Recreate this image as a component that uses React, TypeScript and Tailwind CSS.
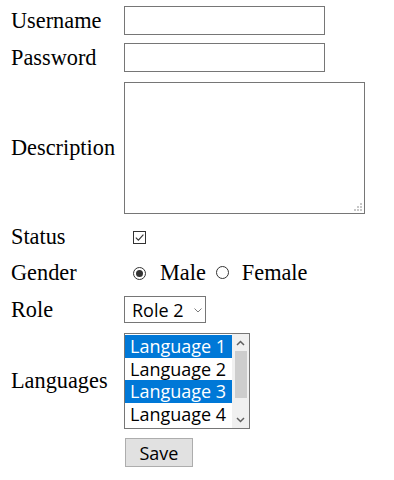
import React from "react";

const serif = { fontFamily: '"Liberation Serif", "Times New Roman", serif' };

function Row({ label, h, children }: { label: string; h: string; children: React.ReactNode }) {
  return (
    <div className={`flex items-center ${h}`}>
      <div className="w-[113px] shrink-0 text-[22.3px] leading-normal text-black">{label}</div>
      <div className="flex items-center">{children}</div>
    </div>
  );
}

function Option({ text, selected }: { text: string; selected?: boolean }) {
  return (
    <div
      className={`h-[22.5px] shrink-0 pl-[5px] flex items-center text-[18px] leading-none whitespace-nowrap ${
        selected ? "bg-[#0078d7] text-white" : "text-black"
      }`}
    >
      {text}
    </div>
  );
}

export default function App() {
  const sans = { fontFamily: '"Open Sans", "Noto Sans", sans-serif' };
  return (
    <div className="w-[394px] h-[480px] bg-white pt-[2px] pl-[11px]" style={serif}>
      <Row label="Username" h="h-[37px]">
        <div className="w-[201px] h-[29px] border border-[#767676] bg-white" />
      </Row>
      <Row label="Password" h="h-[37px]">
        <div className="w-[201px] h-[29px] border border-[#767676] bg-white" />
      </Row>
      <Row label="Description" h="h-[144px]">
        <div className="relative w-[241px] h-[132px] border border-[#767676] bg-white">
          <svg className="absolute right-[2px] bottom-[2px]" width="9" height="9" viewBox="0 0 9 9">
            <rect x="7" y="1" width="2" height="2" fill="#c8c8c8" />
            <rect x="4" y="4" width="2" height="2" fill="#c8c8c8" />
            <rect x="7" y="4" width="2" height="2" fill="#c8c8c8" />
            <rect x="1" y="7" width="2" height="2" fill="#c8c8c8" />
            <rect x="4" y="7" width="2" height="2" fill="#c8c8c8" />
            <rect x="7" y="7" width="2" height="2" fill="#c8c8c8" />
          </svg>
        </div>
      </Row>
      <Row label="Status" h="h-[34px]">
        <div className="ml-[9px] w-[13px] h-[13px] border border-[#333333] bg-white flex items-center justify-center">
          <svg width="11" height="11" viewBox="0 0 11 11">
            <path d="M1.8 5.6 L4.4 8.2 L9.4 2.6" fill="none" stroke="#333333" strokeWidth="1.1" />
          </svg>
        </div>
      </Row>
      <Row label="Gender" h="h-[38px]">
        <div className="flex items-center text-[22.3px] leading-normal text-black">
          <div className="ml-[9px] w-[13px] h-[13px] rounded-full border border-[#333333] flex items-center justify-center">
            <div className="w-[7px] h-[7px] rounded-full bg-[#333333]" />
          </div>
          <span className="ml-[14px]">Male</span>
          <div className="ml-[10px] w-[13px] h-[13px] rounded-full border border-[#333333] -mt-[2px]" />
          <span className="ml-[13px]">Female</span>
        </div>
      </Row>
      <Row label="Role" h="h-[35px]">
        <div
          className="w-[82px] h-[27px] border border-[#767676] bg-white flex items-center pl-[7px] text-[18px] text-black leading-none"
          style={sans}
        >
          <span>Role 2</span>
          <svg className="ml-[10px] mt-[2px]" width="8" height="5" viewBox="0 0 8 5">
            <path d="M0.5 0.5 L4 4 L7.5 0.5" fill="none" stroke="#6d6d6d" strokeWidth="0.9" />
          </svg>
        </div>
      </Row>
      <Row label="Languages" h="h-[108px]">
        <div className="w-[126px] h-[96px] border border-[#767676] bg-white flex" style={sans}>
          <div className="flex-1 flex flex-col pt-[1px] overflow-hidden">
            <Option text="Language 1" selected />
            <Option text="Language 2" />
            <Option text="Language 3" selected />
            <Option text="Language 4" />
          </div>
          <div className="w-[17px] bg-[#f0f0f0] flex flex-col items-center">
            <div className="h-[17px] w-full flex items-center justify-center">
              <svg width="9" height="6" viewBox="0 0 9 6">
                <path d="M1 5 L4.5 1.5 L8 5" fill="none" stroke="#606060" strokeWidth="1.5" />
              </svg>
            </div>
            <div className="w-[12px] h-[47px] bg-[#cdcdcd]" />
            <div className="flex-1" />
            <div className="h-[17px] w-full flex items-center justify-center">
              <svg width="9" height="6" viewBox="0 0 9 6">
                <path d="M1 1 L4.5 4.5 L8 1" fill="none" stroke="#606060" strokeWidth="1.5" />
              </svg>
            </div>
          </div>
        </div>
      </Row>
      <Row label="" h="h-[35px]">
        <div
          className="ml-[1px] w-[68px] h-[29px] border border-[#adadad] bg-[#e1e1e1] flex items-center justify-center text-[18px] text-black leading-none"
          style={sans}
        >
          Save
        </div>
      </Row>
    </div>
  );
}
